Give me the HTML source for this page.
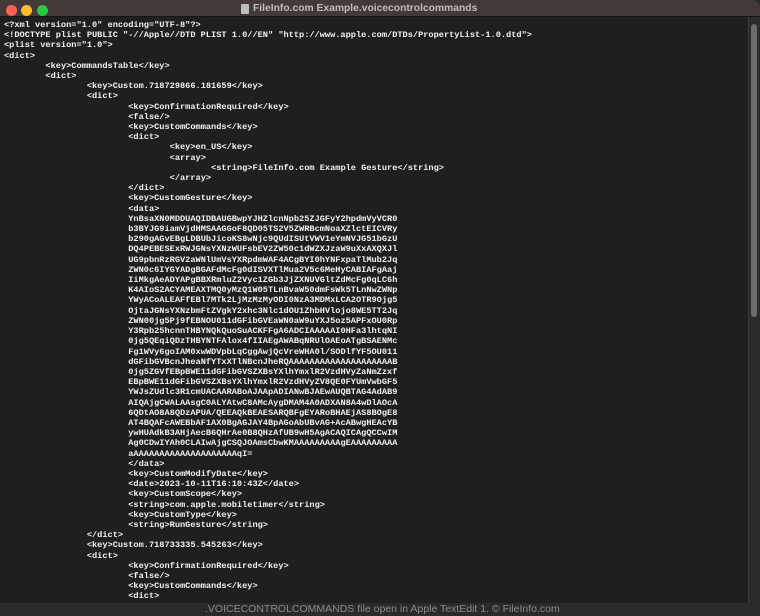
<!DOCTYPE html>
<html><head><meta charset="utf-8"><style>
*{margin:0;padding:0;box-sizing:border-box}
body{width:760px;height:616px;background:#2a2a2a;overflow:hidden;position:relative;font-family:"Liberation Sans",sans-serif}
.title{position:absolute;left:0;top:0;width:760px;height:17px;background:#433937;border-bottom:1px solid #151515;border-radius:0 8px 0 0}
.dot{position:absolute;top:5px;width:11px;height:11px;border-radius:50%;z-index:2}
.ttext{position:absolute;left:253px;top:3px;font-size:10.3px;font-weight:bold;color:#c2bcbb;white-space:nowrap}
.icon{position:absolute;left:241px;top:4px;width:8px;height:10px;background:#bdbdbd;border-radius:1px}
.content{position:absolute;left:0;top:17px;width:748px;height:586px;background:#1f1f1f;overflow:hidden}
pre{position:absolute;left:4px;top:3px;font-family:"Liberation Mono",monospace;font-size:8.65px;line-height:10.21px;color:#f2f2f2;font-weight:bold;tab-size:8;-moz-tab-size:8;letter-spacing:0}
.track{position:absolute;left:748px;top:17px;width:12px;height:586px;background:#2b2b2b;border-left:1px solid #3a3a3a}
.thumb{position:absolute;left:751px;top:24px;width:6px;height:293px;background:#6b6b6b;border-radius:3px}
.foot{position:absolute;left:0;top:603px;width:760px;height:13px;font-size:10.5px;color:#8a8a8a;line-height:12px;padding-left:205px;text-align:left}
</style></head><body>
<div class="title">
<div class="icon"></div>
<div class="ttext">FileInfo.com Example.voicecontrolcommands</div>
</div>
<div class="dot" style="left:6px;background:#fe5f57"></div>
<div class="dot" style="left:21px;background:#febc2e"></div>
<div class="dot" style="left:37px;background:#28c840"></div>
<div class="content"><pre>&lt;?xml version="1.0" encoding="UTF-8"?&gt;
&lt;!DOCTYPE plist PUBLIC "-//Apple//DTD PLIST 1.0//EN" "http://www.apple.com/DTDs/PropertyList-1.0.dtd"&gt;
&lt;plist version="1.0"&gt;
&lt;dict&gt;
	&lt;key&gt;CommandsTable&lt;/key&gt;
	&lt;dict&gt;
		&lt;key&gt;Custom.718729866.181659&lt;/key&gt;
		&lt;dict&gt;
			&lt;key&gt;ConfirmationRequired&lt;/key&gt;
			&lt;false/&gt;
			&lt;key&gt;CustomCommands&lt;/key&gt;
			&lt;dict&gt;
				&lt;key&gt;en_US&lt;/key&gt;
				&lt;array&gt;
					&lt;string&gt;FileInfo.com Example Gesture&lt;/string&gt;
				&lt;/array&gt;
			&lt;/dict&gt;
			&lt;key&gt;CustomGesture&lt;/key&gt;
			&lt;data&gt;
			YnBsaXN0MDDUAQIDBAUGBwpYJHZlcnNpb25ZJGFyY2hpdmVyVCR0
			b3BYJG9iamVjdHMSAAGGoF8QD05TS2V5ZWRBcmNoaXZlctEICVRy
			b290gAGvEBgLDBUbJicoKS8wNjc9QUdISUtVWV1eYmNVJG51bGzU
			DQ4PEBESExRWJGNsYXNzWUFsbEV2ZW50c1dWZXJzaW9uXxAXQXJl
			UG9pbnRzRGV2aWNlUmVsYXRpdmWAF4ACgBYI0hYNFxpaTlMub2Jq
			ZWN0c6IYGYADgBGAFdMcFg0dISVXTlMua2V5c6MeHyCABIAFgAaj
			IiMkgAeADYAPgBBXRmluZ2Vyc1ZGb3JjZXNUVGltZdMcFg0qLC6h
			K4AIoS2ACYAMEAXTMQ0yMzQ1W05TLnBvaW50dmFsWk5TLnNwZWNp
			YWyACoALEAFfEBl7MTk2LjMzMzMyODI0NzA3MDMxLCA2OTR9Ojg5
			OjtaJGNsYXNzbmFtZVgkY2xhc3Nlc1dOU1ZhbHVlojo8WE5TT2Jq
			ZWN00jg5Pj9fEBNOU011dGFibGVEaWN0aW9uYXJ5oz5APFxOU0Rp
			Y3Rpb25hcnnTHBYNQkQuoSuACKFFgA6ADCIAAAAAI0HFa3lhtqNI
			0jg5QEqiQDzTHBYNTFAlox4fIIAEgAWABqNRUlOAEoATgBSAENMc
			Fg1WVy6goIAM0xwWDVpbLqCggAwjQcVreWHA0l/SODlfYF5OU011
			dGFibGVBcnJheaNfYTxXTlNBcnJheRQAAAAAAAAAAAAAAAAAAAAB
			0jg5ZGVfEBpBWE11dGFibGVSZXBsYXlhYmxlR2VzdHVyZaNmZzxf
			EBpBWE11dGFibGVSZXBsYXlhYmxlR2VzdHVyZV8QE0FYUmVwbGF5
			YWJsZUdlc3R1cmUACAARABoAJAApADIANwBJAEwAUQBTAG4AdAB9
			AIQAjgCWALAAsgC0ALYAtwC8AMcAygDMAM4A0ADXAN8A4wDlAOcA
			6QDtAO8A8QDzAPUA/QEEAQkBEAESARQBFgEYARoBHAEjAS8BOgE8
			AT4BQAFcAWEBbAF1AX0BgAGJAY4BpAGoAbUBvAG+AcABwgHEAcYB
			ywHUAdkB3AHjAecB6QHrAe0B8QHzAfUB9wH5AgACAQICAgQCCwIM
			Ag0CDwIYAh0CLAIwAjgCSQJOAmsCbwKMAAAAAAAAAgEAAAAAAAAA
			aAAAAAAAAAAAAAAAAAAAAqI=
			&lt;/data&gt;
			&lt;key&gt;CustomModifyDate&lt;/key&gt;
			&lt;date&gt;2023-10-11T16:10:43Z&lt;/date&gt;
			&lt;key&gt;CustomScope&lt;/key&gt;
			&lt;string&gt;com.apple.mobiletimer&lt;/string&gt;
			&lt;key&gt;CustomType&lt;/key&gt;
			&lt;string&gt;RunGesture&lt;/string&gt;
		&lt;/dict&gt;
		&lt;key&gt;Custom.718733335.545263&lt;/key&gt;
		&lt;dict&gt;
			&lt;key&gt;ConfirmationRequired&lt;/key&gt;
			&lt;false/&gt;
			&lt;key&gt;CustomCommands&lt;/key&gt;
			&lt;dict&gt;
</pre></div>
<div class="track"></div>
<div class="thumb"></div>
<div class="foot">.VOICECONTROLCOMMANDS file open in Apple TextEdit 1. © FileInfo.com</div>
</body></html>
